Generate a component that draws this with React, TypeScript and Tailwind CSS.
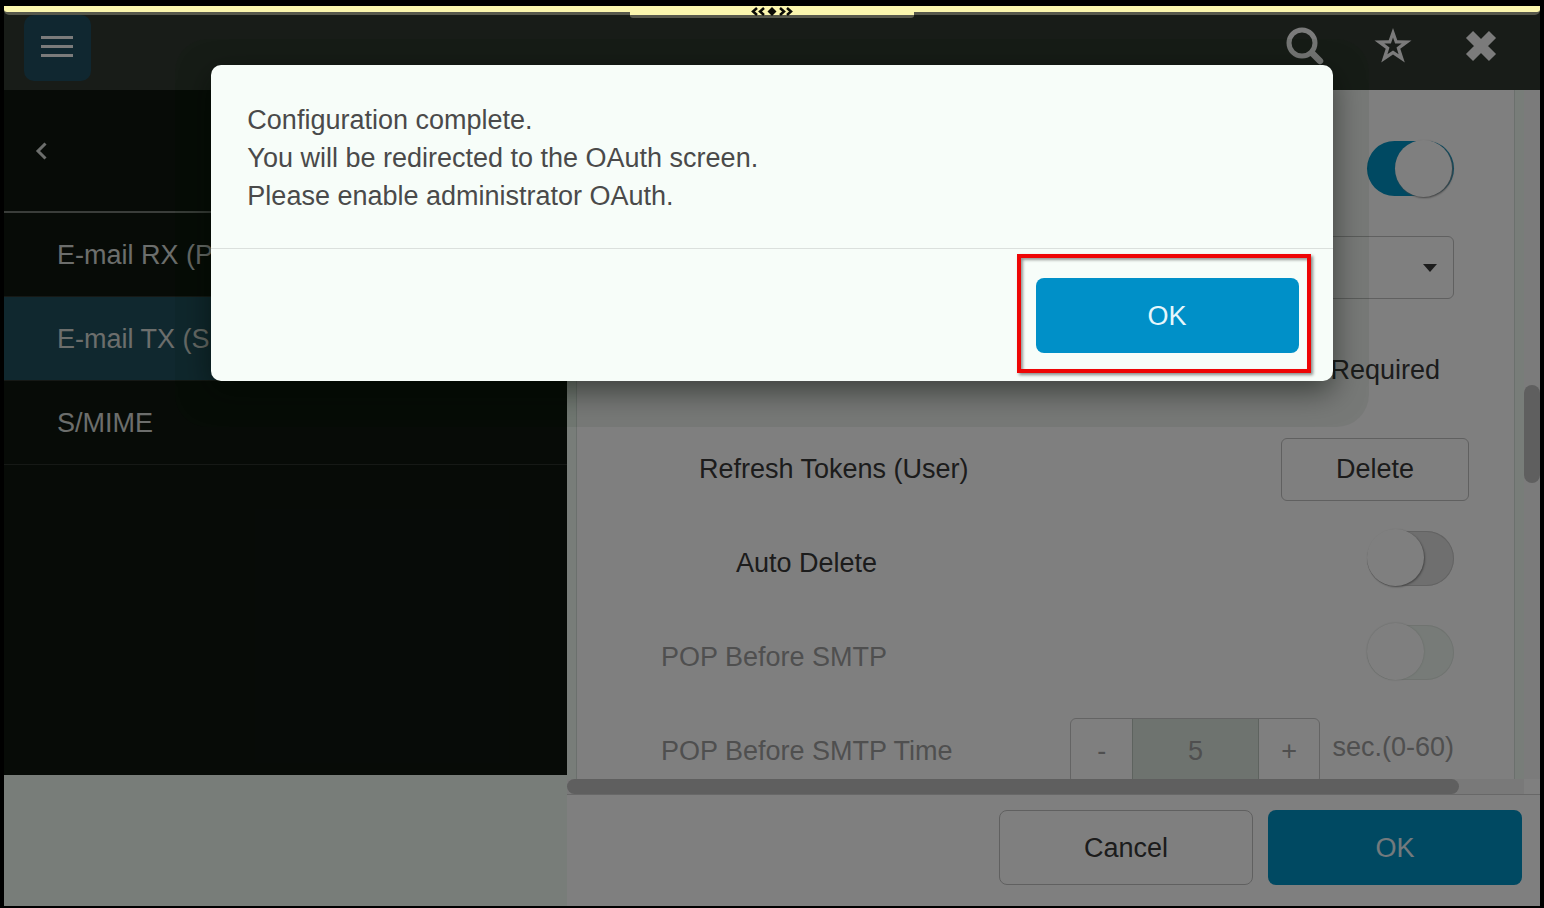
import type { ReactNode } from "react";
import clsx from "clsx";

const menuItems = [
  { id: "rx", label: "E-mail RX (POP)", active: false },
  { id: "tx", label: "E-mail TX (SMTP)", active: true },
  { id: "smime", label: "S/MIME", active: false },
];

function SearchIcon() {
  return (
    <svg viewBox="0 0 38 38" className="size-[38px]" fill="none" stroke="currentColor">
      <circle cx="16" cy="16" r="13" strokeWidth="5" />
      <path d="M26 26 34 34" strokeWidth="6.500" strokeLinecap="round" />
    </svg>
  );
}

function StarIcon() {
  return (
    <svg viewBox="0 0 38 36" className="h-9 w-[38px]" fill="currentColor" fillRule="evenodd">
      <path d="M19 0 23.300 12.300 37.500 12.500 26.300 20.800 30.800 34.500 19 26.500 7.200 34.500 11.700 20.800.5 12.500 14.700 12.300ZM19 9.500 16.900 15.500 10.300 15.600 15.500 19.600 13.400 26.300 19 22.400 24.600 26.300 22.500 19.600 27.700 15.600 21.100 15.500Z" />
    </svg>
  );
}

function CloseIcon() {
  return (
    <svg viewBox="0 0 32 32" className="size-8" fill="none" stroke="currentColor">
      <path d="M4.500 4.500 27.500 27.500M27.500 4.500 4.500 27.500" strokeWidth="10" />
    </svg>
  );
}

function PanelHandle() {
  return (
    <div className="absolute inset-x-0 top-0 z-20 flex h-[9px] justify-center rounded-b-[5px] border-b-[3px] border-[#57584c] bg-[#fbf6ae]">
      <div className="flex h-3 w-[284px] shrink-0 justify-center rounded-b-[3px] border-b-[3px] border-[#57584c] bg-[#fbf6ae]">
        <svg viewBox="0 0 44 10" className="h-[10px] w-11 shrink-0" fill="none" stroke="#0b0b06" strokeWidth="2.500">
          <path d="M7 2 3 5.500 7 9M14 2 10 5.500 14 9M30 2 34 5.500 30 9M37 2 41 5.500 37 9" />
          <path d="M22 1 26.500 5.500 22 10 17.500 5.500Z" fill="#0b0b06" stroke="none" />
        </svg>
      </div>
    </div>
  );
}

function Header() {
  return (
    <header className="flex h-[84px] shrink-0 items-start justify-between bg-[#303830] pl-5 pr-[15px] text-[#f6f6f6]">
      <button
        type="button"
        aria-label="Menu"
        className="mt-[9px] flex h-[66px] w-[67px] flex-col items-center justify-center gap-[6px] rounded-[10px] bg-[#204e60] pb-1 pr-px"
      >
        <span className="h-[3px] w-8 bg-[#f6f6f6]" />
        <span className="h-[3px] w-8 bg-[#f6f6f6]" />
        <span className="h-[3px] w-8 bg-[#f6f6f6]" />
      </button>
      <div className="mt-[21px] flex items-center">
        <button type="button" aria-label="Search" className="flex w-[88px] justify-center">
          <SearchIcon />
        </button>
        <button type="button" aria-label="Favorite" className="flex w-[88px] justify-center">
          <StarIcon />
        </button>
        <button type="button" aria-label="Close" className="flex w-[88px] justify-center">
          <CloseIcon />
        </button>
      </div>
    </header>
  );
}

function Sidebar() {
  return (
    <div className="flex w-[563px] shrink-0 flex-col bg-[#f0faf3]">
      <nav className="flex-1 bg-[#0e160f] text-[#d8dcd8]">
        <div className="flex h-[123px] items-center border-b-2 border-[#747a74] pl-[27px]">
          <button type="button" aria-label="Back" className="p-1">
            <svg viewBox="0 0 12 18" className="h-[18px] w-3" fill="none" stroke="currentColor" strokeWidth="3">
              <path d="M10.500 1.500 3 9l7.500 7.500" />
            </svg>
          </button>
        </div>
        <ul>
          {menuItems.map((item) => (
            <li key={item.id} className="border-b border-[#2c332d]">
              <a
                href={`#${item.id}`}
                className={clsx(
                  "flex h-[83px] items-center pl-[53px]",
                  item.active && "bg-[#20505f]",
                )}
              >
                {item.label}
              </a>
            </li>
          ))}
        </ul>
      </nav>
      <div className="h-[131px] shrink-0" />
    </div>
  );
}

function Toggle({ id, label, on, disabled }: { id: string; label?: string; on?: boolean; disabled?: boolean }) {
  return (
    <input
      id={id}
      type="checkbox"
      role="switch"
      aria-label={label}
      defaultChecked={on}
      disabled={disabled}
      className={clsx(
        "mr-[60px] flex h-[55px] w-[87px] shrink-0 appearance-none rounded-full",
        "before:size-[57px] before:shrink-0 before:rounded-full before:bg-white",
        disabled
          ? "items-end bg-[#eef7f0] shadow-[inset_0_0_0_1px_#e0e6e1] before:shadow-[0_0_2px_#c4cac5]"
          : "items-end bg-[#dedede] shadow-[inset_0_0_0_1px_#c6c6c6] before:shadow-[1px_1px_2px_#8c8c8c] checked:items-center checked:justify-end checked:bg-[#0092c4] checked:pr-[2px] checked:shadow-none",
      )}
    />
  );
}

function Row({ className, children }: { className: string; children: ReactNode }) {
  return (
    <div className={clsx("flex shrink-0 items-center justify-between", className)}>
      {children}
    </div>
  );
}

function Settings() {
  return (
    <div className="mx-[9px] flex flex-1 flex-col overflow-hidden border-x border-[#d6e0da] bg-white pt-[29px] text-[#383838]">
      <Row className="h-[98px]">
        <span />
        <Toggle id="oauth" label="OAuth" on />
      </Row>
      <Row className="h-[101px]">
        <span />
        <div className="mr-[60px] flex h-[63px] w-[380px] items-center rounded-[6px] border border-[#c0c0c0] pr-4">
          <select aria-label="Provider" className="h-full flex-1 appearance-none outline-none" />
          <svg viewBox="0 0 14 8" className="h-2 w-[14px]">
            <path d="M0 0H14L7 8Z" fill="#383838" />
          </svg>
        </div>
      </Row>
      <Row className="h-[104px]">
        <span />
        <span className="mr-[74px]">Required</span>
      </Row>
      <Row className="h-[94px] pl-[122px]">
        <span>Refresh Tokens (User)</span>
        <button type="button" className="mr-[45px] h-[63px] w-[188px] rounded-[6px] border border-[#c0c0c0]">
          Delete
        </button>
      </Row>
      <Row className="h-[94px] pl-[159px]">
        <label htmlFor="auto-delete">Auto Delete</label>
        <div className="pb-[10px]">
          <Toggle id="auto-delete" />
        </div>
      </Row>
      <Row className="h-[94px] pl-[84px] text-[#9e9e9e]">
        <label htmlFor="pop-before">POP Before SMTP</label>
        <div className="pb-[10px]">
          <Toggle id="pop-before" disabled />
        </div>
      </Row>
      <Row className="h-[94px] pl-[84px] text-[#9e9e9e]">
        <label htmlFor="pop-time">POP Before SMTP Time</label>
        <div className="mr-[60px] flex items-center gap-3">
          <div className="flex h-[66px] w-[250px] rounded-[6px] border border-[#c8c8c8]">
            <button type="button" aria-label="Decrease" disabled className="flex-1">
              -
            </button>
            <input
              id="pop-time"
              defaultValue="5"
              disabled
              className="w-[127px] border-x border-[#bcc6be] bg-[#dce6de] text-center"
            />
            <button type="button" aria-label="Increase" disabled className="flex-1">
              +
            </button>
          </div>
          <span className="pb-2">sec.(0-60)</span>
        </div>
      </Row>
    </div>
  );
}

function Content() {
  return (
    <main className="flex min-w-0 flex-1 flex-col bg-white">
      <div className="flex min-h-0 flex-1 bg-[#f0faf3]">
        <Settings />
        <div className="w-4 bg-[#f6f6f6] pt-[295px]">
          <div className="h-[98px] rounded-full bg-[#bebebe]" />
        </div>
      </div>
      <div className="mr-4 h-[15px] shrink-0 bg-[#f2f2f2] pr-[65px]">
        <div className="h-full rounded-full bg-[#bebebe]" />
      </div>
      <footer className="flex h-[112px] shrink-0 items-start justify-end gap-[15px] border-t border-[#d0d0d0] pr-[18px] pt-[15px] text-[#383838]">
        <button type="button" className="h-[75px] w-[254px] rounded-lg border border-[#c0c0c0]">
          Cancel
        </button>
        <button type="button" className="h-[75px] w-[254px] rounded-lg bg-[#0092c4] text-[#e6f4fa]">
          OK
        </button>
      </footer>
    </main>
  );
}

function ConfirmDialog() {
  return (
    <div className="absolute inset-0 z-10 flex items-start justify-center bg-black/50 pt-[59px]">
      <div
        role="dialog"
        aria-modal="true"
        aria-labelledby="dialog-message"
        className="w-[73%] rounded-[10px] bg-[#f7fdf9] shadow-[0_10px_30px_rgba(0,8,0,0.5),0_10px_0_36px_rgba(0,40,0,0.06)]"
      >
        <p id="dialog-message" className="border-b border-[#dbe0dd] px-9 pb-[33px] pt-9 leading-[38px] text-[#4a4a4a]">
          Configuration complete.
          <br />
          You will be redirected to the OAuth screen.
          <br />
          Please enable administrator OAuth.
        </p>
        <div className="flex justify-end pb-7 pr-[34px] pt-[29px]">
          <div className="relative">
            <button type="button" className="h-[75px] w-[263px] rounded-lg bg-[#0090c8] text-[#e6f7fc]">
              OK
            </button>
            <div className="pointer-events-none absolute -bottom-5 -left-[19px] -right-3 -top-6 border-4 border-[#ee0606] shadow-[2px_2px_3px_rgba(0,0,0,0.45),inset_2px_2px_3px_rgba(0,0,0,0.4)]" />
          </div>
        </div>
      </div>
    </div>
  );
}

export default function App() {
  return (
    <div className="h-screen bg-black px-1 pb-[2px] pt-[6px] font-['Liberation_Sans',Arial,sans-serif] text-[27px] leading-8">
      <div className="relative flex h-full flex-col overflow-hidden">
        <PanelHandle />
        <Header />
        <div className="flex min-h-0 flex-1">
          <Sidebar />
          <Content />
        </div>
        <ConfirmDialog />
      </div>
    </div>
  );
}
